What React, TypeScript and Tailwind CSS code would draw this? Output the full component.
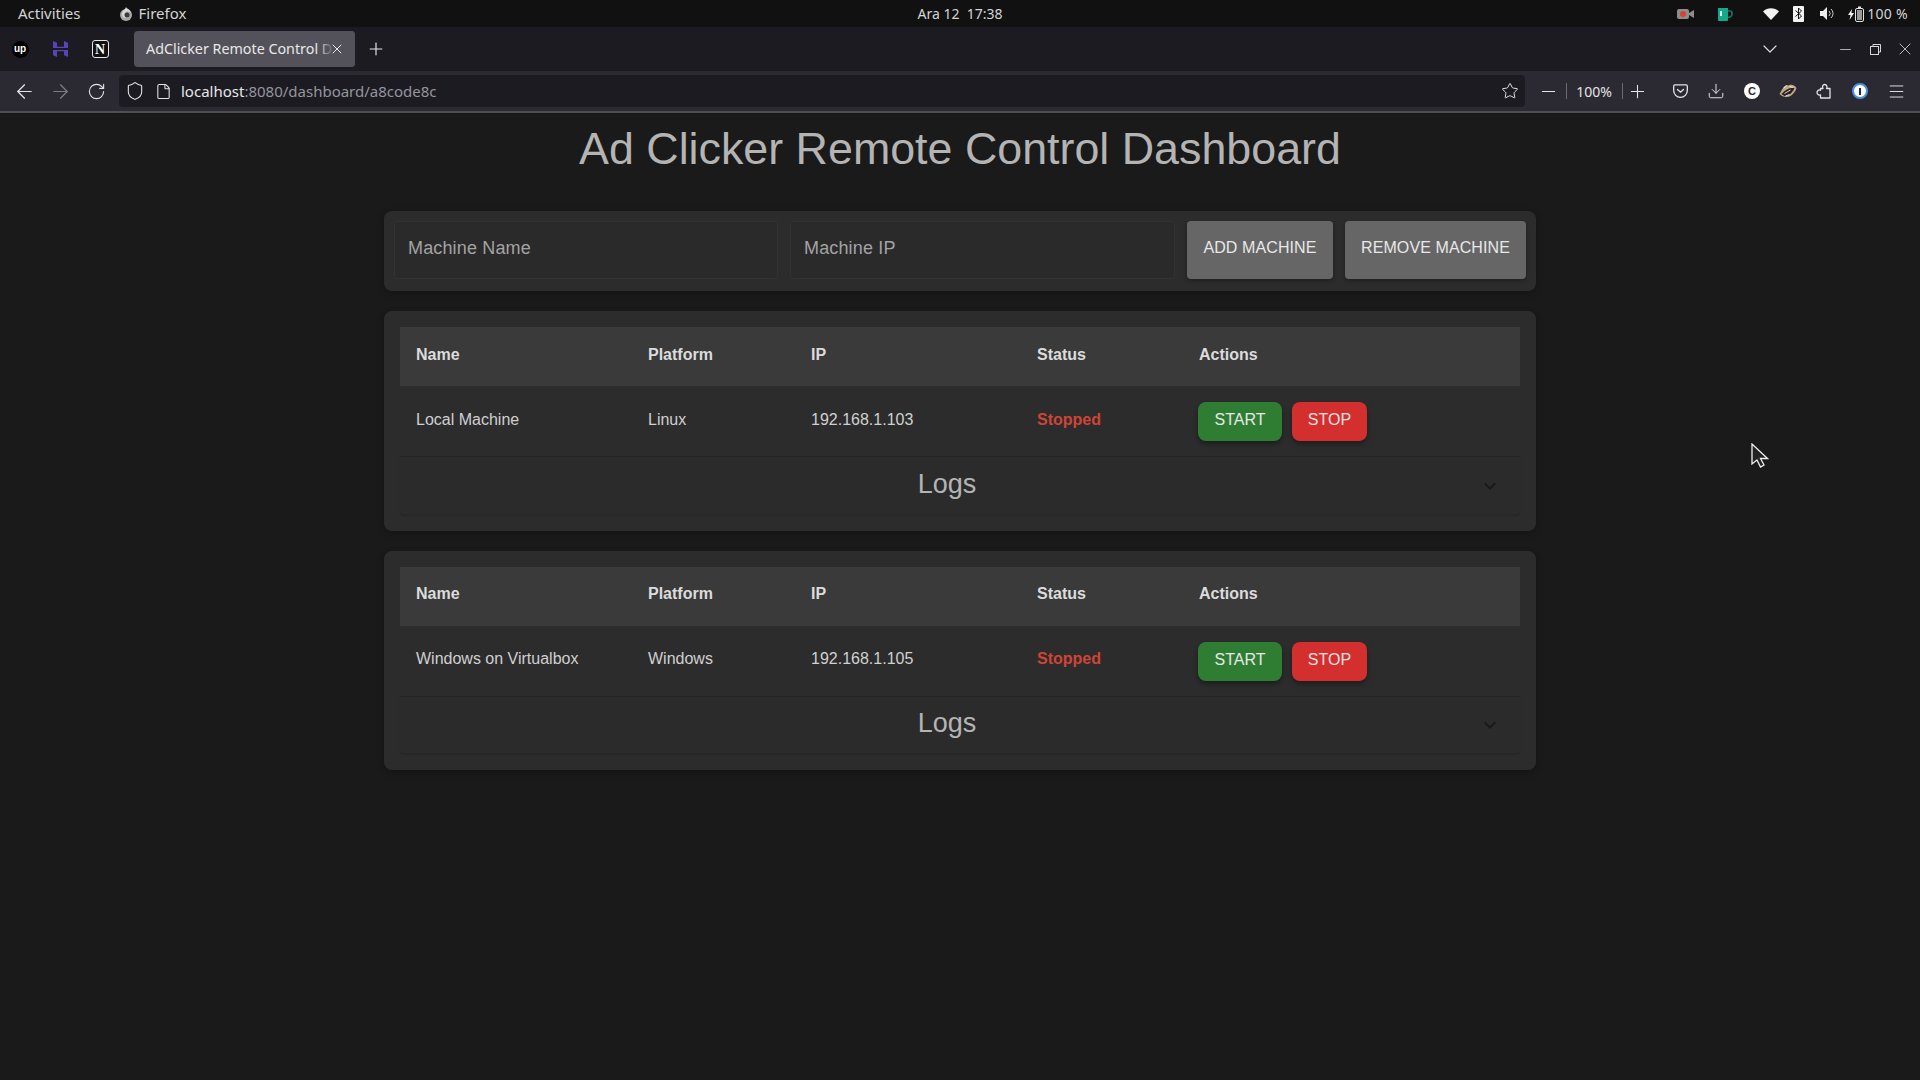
import { ChevronDown, Minus, Plus, X, ArrowLeft, ArrowRight, RotateCw, Star, Menu, Download, File, Shield } from "lucide-react";

const machines = [
  { name: "Local Machine", platform: "Linux", ip: "192.168.1.103" },
  { name: "Windows on Virtualbox", platform: "Windows", ip: "192.168.1.105" },
];

function TopBar() {
  return (
    <div className="grid h-[27px] grid-cols-[1fr_auto_1fr] items-center bg-[#111111] font-['Noto_Sans',sans-serif] text-[14px] text-[#d4d4d4]">
      <div className="flex items-center pl-[18px] text-[15px]">
        <span>Activities</span>
        <svg width="16" height="16" viewBox="0 0 16 16" className="ml-[37px]">
          <circle cx="8" cy="9" r="6" fill="#a8a8a8" />
          <path d="M8 1c1 2 4 2 5 6-2-2-5-2-6 0-1 1 0 4 3 4-2 2-6 1-6-3 0-3 3-4 4-7z" fill="#d8d8d8" />
          <circle cx="9" cy="9" r="2.5" fill="#3a3a3a" />
        </svg>
        <span className="ml-[5px]">Firefox</span>
      </div>
      <div className="whitespace-pre">Ara 12  17:38</div>
      <div className="flex items-center justify-end pr-[12px]">
        <svg width="18" height="12" viewBox="0 0 18 12">
          <rect x="0" y="1" width="12" height="10" rx="2" fill="#8d8d8d" />
          <circle cx="6" cy="6" r="3" fill="#d8432f" />
          <path d="M12 5l5-3v8l-5-3z" fill="#8d8d8d" />
        </svg>
        <svg width="16" height="16" viewBox="0 0 16 16" className="ml-[22px]">
          <path d="M1 2h10v12a1 1 0 0 1-1 1H2a1 1 0 0 1-1-1z" fill="#14a98a" />
          <path d="M11 5h2a2 2 0 0 1 2 2v1a3 3 0 0 1-4 3" fill="none" stroke="#127a66" strokeWidth="1.6" />
          <rect x="3" y="5" width="2" height="5" fill="#d9f5ee" />
        </svg>
        <svg width="16" height="12" viewBox="0 0 16 12" className="ml-[30px]">
          <path d="M0 3.5C4.5-.8 11.5-.8 16 3.5L8 12z" fill="#f2f2f2" />
        </svg>
        <div className="ml-[14px] flex h-[16px] w-[11px] items-center justify-center rounded-[1px] bg-[#f2f2f2]">
          <svg width="7" height="13" viewBox="0 0 7 13" fill="none" stroke="#111111" strokeWidth="1">
            <path d="M0.5 3.5l6 5.5-3 3V1l3 3-6 5.5" />
          </svg>
        </div>
        <svg width="15" height="13" viewBox="0 0 15 13" className="ml-[16px]">
          <path d="M0 4h3l4-4v13l-4-4H0z" fill="#eeeeee" />
          <path d="M9 4a3.5 3.5 0 0 1 0 5M11 2a6 6 0 0 1 0 9" fill="none" stroke="#c9c9c9" strokeWidth="1" />
        </svg>
        <svg width="16" height="16" viewBox="0 0 16 16" className="ml-[13px]">
          <path d="M4 3L0 9h2.5L1.5 14 6 7H3.5z" fill="#eeeeee" />
          <rect x="7.5" y="2.5" width="8" height="13" rx="1.5" fill="none" stroke="#e4e4e4" />
          <rect x="10" y="0.5" width="3" height="2" fill="#e4e4e4" />
          <rect x="9" y="4" width="5" height="10" fill="#9a9a9a" />
        </svg>
        <span className="ml-[3px] tracking-[0.3px]">100 %</span>
      </div>
    </div>
  );
}

function TabBar() {
  return (
    <div className="flex h-[44px] items-center bg-[#1c1b22] text-[#e6e6e6]">
      <div className="flex w-[40px] justify-center">
        <span className="flex h-[17px] w-[17px] items-center justify-center rounded-full bg-black pb-[2px] font-['Liberation_Sans',sans-serif] text-[10px] font-bold text-white">up</span>
      </div>
      <div className="flex w-[40px] justify-center">
        <svg width="15" height="16" viewBox="0 0 15 18" preserveAspectRatio="none" fill="#5a42b8">
          <path d="M0 0l4 2v4.5l7 0V0l4 2v6H0z" />
          <path d="M0 10h15v8l-4-2v-4.5H4V18l-4-2z" />
        </svg>
      </div>
      <div className="flex w-[40px] justify-center">
        <span className="flex h-[18px] w-[17px] items-center justify-center rounded-[3px] border-[1.5px] border-[#e8e8e8] bg-[#111111] font-['Liberation_Serif',serif] text-[14px] font-bold text-white">N</span>
      </div>
      <div className="relative ml-[14px] flex h-[36px] w-[221px] items-center overflow-hidden rounded-[4px] bg-[#53525b] pl-[12px] font-['Noto_Sans',sans-serif] text-[14.3px] text-[#e8e8e8]">
        <span className="whitespace-nowrap">AdClicker Remote Control D</span>
        <div className="absolute right-0 top-0 flex h-full w-[38px] items-center bg-gradient-to-r from-transparent to-[#53525b] to-[45%] pl-[12px]">
          <X size={16} strokeWidth={1.5} />
        </div>
      </div>
      <Plus size={20} strokeWidth={1.4} className="ml-[11px]" />
      <div className="ml-auto flex items-center text-[#d8d8d8]">
        <ChevronDown size={24} strokeWidth={1.2} className="mr-[55px]" />
        <Minus size={17} strokeWidth={1.1} className="mr-[16px]" />
        <svg width="11" height="11" viewBox="0 0 11 11" fill="none" stroke="currentColor" className="mr-[14px]">
          <rect x="0.5" y="2.5" width="8" height="8" />
          <path d="M3 2.5V.5h7.5V8H8.5" />
        </svg>
        <X size={20} strokeWidth={1} className="mr-[5.5px]" />
      </div>
    </div>
  );
}

function ToolBtn({ children }: { children: React.ReactNode }) {
  return <div className="flex w-[36px] items-center justify-center">{children}</div>;
}

function Toolbar() {
  return (
    <div className="flex h-[42px] items-center border-b-2 border-[#4f4f52] bg-[#2b2a33] text-[#e4e4e6]">
      <div className="flex w-[119px] items-center pl-[6px]">
        <ToolBtn><ArrowLeft size={23} strokeWidth={1.3} /></ToolBtn>
        <ToolBtn><ArrowRight size={23} strokeWidth={1.3} className="text-[#7c7b82]" /></ToolBtn>
        <ToolBtn><RotateCw size={19} strokeWidth={1.4} /></ToolBtn>
      </div>
      <div className="flex h-[32px] w-[1406px] items-center rounded-[4px] bg-[#1c1b22] font-['Noto_Sans',sans-serif] text-[15px]">
        <Shield size={20} strokeWidth={1.3} className="ml-[6px]" />
        <File size={17} strokeWidth={1.5} className="ml-[10px]" />
        <span className="ml-[9px] text-[#e8e8e8]">localhost<span className="text-[#96959c]">:8080/dashboard/a8code8c</span></span>
        <Star size={18} strokeWidth={1.3} className="ml-auto mr-[6px]" />
      </div>
      <div className="ml-[13px] flex items-center font-['Noto_Sans',sans-serif] text-[14px]">
        <Minus size={21} strokeWidth={1.2} />
        <div className="ml-[7px] h-[16px] w-px bg-[#6a6a70]" />
        <span className="ml-[9px] w-[36px] text-center">100%</span>
        <div className="ml-[10px] h-[16px] w-px bg-[#6a6a70]" />
        <Plus size={21} strokeWidth={1.2} className="ml-[4px]" />
      </div>
      <div className="ml-[14px] flex items-center">
        <ToolBtn>
          <svg width="15" height="14" viewBox="0 0 16 15" fill="none" stroke="currentColor" strokeWidth="1.4">
            <path d="M2 1h12a1.3 1.3 0 0 1 1.3 1.3V7A7.3 7.3 0 0 1 .7 7V2.3A1.3 1.3 0 0 1 2 1z" />
            <path d="M4.8 5.8L8 8.8l3.2-3" strokeLinecap="round" />
          </svg>
        </ToolBtn>
        <ToolBtn><Download size={18} strokeWidth={1.3} /></ToolBtn>
        <ToolBtn>
          <span className="flex h-[16px] w-[16px] items-center justify-center rounded-full bg-white font-['Liberation_Sans',sans-serif] text-[11px] font-bold text-[#2b2a33]">C</span>
        </ToolBtn>
        <ToolBtn>
          <svg width="18" height="14" viewBox="0 0 17 14">
            <path d="M0 10c2-3 4-8 7-9 1 0 2 1 3 0 3-1 6 1 7 3-1 4-5 9-10 9-3 0-5-1-7-3z" fill="#bfa686" />
            <path d="M2 10c3-3 8-7 13-6-2 5-6 8-10 8z" fill="#26211e" />
            <path d="M5 9.500l6-3.500M4 4l3-2M10 2.500l4 1M6 12l4-1.500" stroke="#f0f0f0" strokeWidth="0.9" />
          </svg>
        </ToolBtn>
        <ToolBtn>
          <svg width="16" height="16" viewBox="0 0 16 16" fill="none" stroke="currentColor" strokeWidth="1.3" strokeLinejoin="round">
            <path d="M4.5 5.5H7C6 4 6.5 1.500 8.700 1.500S11.500 4 10.500 5.500H14V15H4.500V11.800C3 12.500 1 11.500 1 9.500S3 6.500 4.500 7.200z" />
          </svg>
        </ToolBtn>
        <ToolBtn>
          <span className="flex h-[16px] w-[16px] items-center justify-center rounded-full border-[2px] border-[#4a90e2] bg-white">
            <span className="h-[7px] w-[2px] bg-[#1c2b4a]" />
          </span>
        </ToolBtn>
        <ToolBtn><Menu size={19} strokeWidth={1.2} /></ToolBtn>
      </div>
    </div>
  );
}

function MachineCard({ name, platform, ip }: { name: string; platform: string; ip: string }) {
  const th = "px-4 pt-[14px] pb-[18px] text-left text-[16px] font-bold text-[#dcdcdc]";
  return (
    <div className="rounded-lg bg-[#2c2c2c] p-4 shadow-[0_2px_6px_rgba(0,0,0,0.25)]">
      <table className="w-full table-fixed border-collapse">
        <thead className="bg-[#3a3a3a]">
          <tr className="h-[59px]">
            <th className={`${th} w-[232px]`}>Name</th>
            <th className={`${th} w-[163px]`}>Platform</th>
            <th className={`${th} w-[226px]`}>IP</th>
            <th className={`${th} w-[161px]`}>Status</th>
            <th className={`${th} pl-[17px]`}>Actions</th>
          </tr>
        </thead>
        <tbody>
          <tr className="h-[70px] border-b border-[#262626] text-[16px] text-[#d0d0d0]">
            <td className="px-4 pb-[3px]">{name}</td>
            <td className="px-4 pb-[3px]">{platform}</td>
            <td className="px-4 pb-[3px]">{ip}</td>
            <td className="px-4 pb-[3px] font-bold text-[#cf4436]">Stopped</td>
            <td className="px-4 pb-[15px] pt-4">
              <div className="flex gap-[10px]">
                <button className="h-[39px] w-[84px] rounded-lg bg-[#2e7d32] pb-[3px] text-[16px] text-[#e8e8e8] shadow-[0_3px_5px_rgba(0,0,0,0.35)]">START</button>
                <button className="h-[39px] w-[75px] rounded-lg bg-[#d32f2f] pb-[3px] text-[16px] text-[#f0e0e0] shadow-[0_3px_5px_rgba(0,0,0,0.35)]">STOP</button>
              </div>
            </td>
          </tr>
        </tbody>
      </table>
      <div className="flex h-[57.5px] items-center rounded-b border-b border-[#262626] bg-[#2b2b2b] pl-4 pr-[18px] shadow-[0_1px_2px_rgba(0,0,0,0.1)]">
        <span className="flex-1 pb-[3px] text-center text-[27px] text-[#b4b4b4]">Logs</span>
        <svg width="24" height="24" viewBox="0 0 24 24" fill="#1a1a1a" className="mt-[1px]">
          <path d="M16.59 8.59 12 13.17 7.41 8.59 6 10l6 6 6-6z" />
        </svg>
      </div>
    </div>
  );
}

export default function App() {
  return (
    <div className="relative h-[1080px] overflow-hidden bg-[#1a1a1a] font-['Liberation_Sans',sans-serif]">
      <TopBar />
      <TabBar />
      <Toolbar />
      <main className="mx-auto w-[1152px]">
        <h1 className="whitespace-nowrap pb-[36px] pt-[8px] text-center text-[44.8px] font-normal leading-[54px] text-[#b4b4b4]">
          Ad Clicker Remote Control Dashboard
        </h1>
        <div className="flex flex-col gap-5">
          <div className="flex gap-3 rounded-lg bg-[#2c2c2c] pb-3 pl-[10px] pr-[10px] pt-[10px] shadow-[0_2px_6px_rgba(0,0,0,0.25)]">
            <input placeholder="Machine Name" className="h-[58px] w-[384px] rounded border border-[#333333] bg-[#2a2a2a] px-[13px] pb-[4px] text-[18px] tracking-[0.15px] outline-none placeholder:text-[#a3a3a3]" />
            <input placeholder="Machine IP" className="h-[58px] w-[385px] rounded border border-[#333333] bg-[#2a2a2a] px-[13px] pb-[4px] text-[18px] tracking-[0.15px] outline-none placeholder:text-[#a3a3a3]" />
            <button className="h-[58px] w-[146px] rounded bg-[#666666] pb-[5px] text-[16px] tracking-[0.1px] text-[#e8e8e8] shadow-[0_2px_4px_rgba(0,0,0,0.3)]">ADD MACHINE</button>
            <button className="h-[58px] w-[181px] rounded bg-[#666666] pb-[5px] text-[16px] tracking-[0.1px] text-[#e8e8e8] shadow-[0_2px_4px_rgba(0,0,0,0.3)]">REMOVE MACHINE</button>
          </div>
          {machines.map((m) => (
            <MachineCard key={m.ip} name={m.name} platform={m.platform} ip={m.ip} />
          ))}
        </div>
      </main>
      <svg width="18" height="26" viewBox="0 0 18 26" className="absolute left-[1751px] top-[443px]">
        <path d="M1 1v20l5-4 3.5 7 3.5-2-3.5-6.5H16.5z" fill="#222222" stroke="#f0f0f0" strokeWidth="1.3" />
      </svg>
    </div>
  );
}
